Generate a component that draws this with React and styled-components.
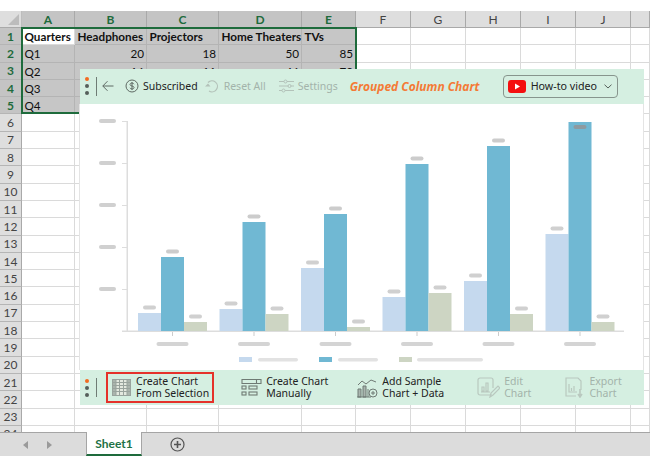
import React from 'react';
import styled, { createGlobalStyle } from 'styled-components';

const GlobalStyle = createGlobalStyle`
	html, body {
		margin: 0;
		background: #ffffff;
	}
	#root {
		width: 650px;
		height: 467px;
		overflow: hidden;
	}
`;

const colWidths = [22, 53, 72, 72, 83, 54, 55, 55, 55, 55, 55, 19];
const colNames = ['A', 'B', 'C', 'D', 'E', 'F', 'G', 'H', 'I', 'J', ''];
const rowCount = 24;
const headerBold = ['Quarters', 'Headphones', 'Projectors', 'Home Theaters', 'TVs'];
const cellData = [
	['Q1', 20, 18, 50, 85],
	['Q2', 16, 11, 46, 70],
	['Q3', '', '', '', ''],
	['Q4', '', '', '', ''],
];

const groups = [
	{ x: 138, light: 313, blue: 257, green: 322 },
	{ x: 219.5, light: 309, blue: 222, green: 314 },
	{ x: 301, light: 268, blue: 214, green: 327 },
	{ x: 382.5, light: 297, blue: 164, green: 293 },
	{ x: 464, light: 281, blue: 146, green: 314 },
	{ x: 545.5, light: 234, blue: 122, green: 322 },
];
const barW = 23;

const Page = styled.div`
	position: relative;
	width: 650px;
	height: 467px;
	padding-top: 11px;
	box-sizing: border-box;
	background: #ffffff;
	font-family: Lato, 'Liberation Sans', sans-serif;
`;

const Sheet = styled.div`
	position: relative;
	display: grid;
	grid-template-columns: ${colWidths.map((w) => `${w}px`).join(' ')};
	grid-template-rows: 17px repeat(${rowCount}, 17.3px);
	height: 421px;
	overflow: hidden;
`;

const Corner = styled.div`
	background: #dedede;
	border-right: 1px solid #bdbdbd;
	border-bottom: 1px solid #a9a9a9;
	box-sizing: border-box;
	display: flex;
	justify-content: flex-end;
	align-items: flex-end;
	padding: 0 2px 2px 0;
	&::after {
		content: '';
		border-left: 11px solid transparent;
		border-bottom: 11px solid #bcbcbc;
	}
`;

const ColHead = styled.div`
	background: ${(p) => (p.$sel ? '#c4c4c4' : '#dedede')};
	color: ${(p) => (p.$sel ? '#1e6b3c' : '#444444')};
	font-size: 12px;
	font-weight: ${(p) => (p.$sel ? 700 : 400)};
	display: flex;
	align-items: center;
	justify-content: center;
	box-sizing: border-box;
	border-right: 1px solid #a9a9a9;
	border-bottom: 1px solid #a9a9a9;
`;

const RowHead = styled.div`
	background: ${(p) => (p.$sel ? '#c4c4c4' : '#dedede')};
	color: ${(p) => (p.$sel ? '#1e6b3c' : '#444444')};
	font-size: 12px;
	font-weight: ${(p) => (p.$sel ? 700 : 400)};
	display: flex;
	align-items: center;
	justify-content: center;
	box-sizing: border-box;
	border-bottom: 1px solid #b5b5b5;
	border-right: 1px solid #a9a9a9;
`;

const Cell = styled.div`
	background: ${(p) => (p.$sel ? '#c6c6c6' : '#ffffff')};
	color: #111111;
	font-size: 11.7px;
	font-weight: ${(p) => (p.$bold ? 700 : 400)};
	text-align: ${(p) => (p.$right ? 'right' : 'left')};
	line-height: 16px;
	padding: 0 2px 0 2.5px;
	white-space: nowrap;
	box-sizing: border-box;
	border-right: 1px solid ${(p) => (p.$sel ? '#b4b4b4' : '#dadada')};
	border-bottom: 1px solid ${(p) => (p.$sel ? '#b4b4b4' : '#dadada')};
`;

const Selection = styled.div`
	position: absolute;
	inset: -1px -1px 0 -1px;
	grid-column: 2 / 7;
	grid-row: 2 / 7;
	border: 2px solid #1e6b3c;
	pointer-events: none;
`;

const TabBar = styled.div`
	height: 24px;
	box-sizing: border-box;
	background: #dcdcdc;
	border-top: 1px solid #a5a5a5;
	display: flex;
	align-items: stretch;
`;

const NavArrows = styled.div`
	width: 86px;
	display: flex;
	align-items: center;
	gap: 19px;
	padding-left: 23px;
	box-sizing: border-box;
`;

const Arrow = styled.span`
	width: 0;
	height: 0;
	border-top: 4px solid transparent;
	border-bottom: 4px solid transparent;
	border-left: ${(p) => (p.$right ? '5px solid #9a9a9a' : 'none')};
	border-right: ${(p) => (p.$right ? 'none' : '5px solid #9a9a9a')};
`;

const SheetTab = styled.div`
	width: 56px;
	margin-top: -1px;
	background: #ffffff;
	border-left: 1px solid #a5a5a5;
	border-right: 1px solid #a5a5a5;
	border-bottom: 2px solid #1e6b3c;
	box-sizing: border-box;
	color: #1e7145;
	font-size: 12px;
	font-weight: 700;
	display: flex;
	align-items: center;
	justify-content: center;
`;

const AddSheet = styled.div`
	margin-left: 28px;
	display: flex;
	align-items: center;
`;

const Panel = styled.div`
	position: absolute;
	left: 80px;
	top: 69px;
	width: 564px;
	height: 336px;
	display: flex;
	flex-direction: column;
	background: #ffffff;
	font-family: 'Noto Sans', 'Open Sans', sans-serif;
`;

const HeaderBar = styled.div`
	height: 35px;
	box-sizing: border-box;
	padding: 0 0 1px 5px;
	background: #d5efe1;
	display: flex;
	align-items: center;
	flex: none;
`;

const BottomBar = styled.div`
	height: 35px;
	background: #d5efe1;
	display: flex;
	align-items: center;
	padding-left: 5px;
	flex: none;
`;

const Grip = styled.div`
	display: flex;
	flex-direction: column;
	gap: 3px;
	width: 5px;
`;

const Dot = styled.span`
	width: 4px;
	height: 4px;
	border-radius: 50%;
	background: ${(p) => (p.$orange ? '#f26b21' : '#555f5a')};
`;

const Divider = styled.div`
	width: 1px;
	height: 19px;
	margin-left: 6px;
	background: #6f7c75;
`;

const HeadItem = styled.div`
	display: flex;
	align-items: center;
	gap: 4px;
	margin-left: ${(p) => p.$ml}px;
	color: ${(p) => (p.$off ? '#a3b3aa' : '#222222')};
	font-size: 10.5px;
	white-space: nowrap;
`;

const Title = styled.div`
	margin-left: 12px;
	width: 153px;
	color: #f47a35;
	font-family: 'Open Sans', sans-serif;
	font-size: 12px;
	font-style: italic;
	font-weight: 700;
	white-space: nowrap;
`;

const VideoButton = styled.div`
	width: 115px;
	height: 23px;
	box-sizing: border-box;
	border: 1px solid #87958d;
	border-radius: 4px;
	display: flex;
	align-items: center;
	padding: 0 5px 0 4px;
	gap: 5px;
	color: #222222;
	font-size: 10.7px;
	white-space: nowrap;
`;

const VideoLabel = styled.span`
	flex: 1;
`;

const ChartArea = styled.div`
	flex: 1;
	min-height: 0;
	border-left: 1px solid #e4e4e4;
	border-right: 1px solid #e4e4e4;
	margin-left: -1px;
	svg {
		display: block;
	}
`;

const ToolButton = styled.div`
	display: flex;
	align-items: center;
	gap: 4px;
	height: 31px;
	box-sizing: border-box;
	margin-left: ${(p) => p.$ml}px;
	padding: 0 3px 0 3px;
	border: ${(p) => (p.$active ? '2px solid #e5312a' : '2px solid transparent')};
	color: ${(p) => (p.$off ? '#a3b3aa' : '#222222')};
	font-size: 10.5px;
	line-height: 11.5px;
	white-space: nowrap;
`;

const ToolLabel = styled.div`
	display: flex;
	flex-direction: column;
`;

const Dots = () => (
	<Grip>
		<Dot $orange />
		<Dot />
		<Dot />
	</Grip>
);

const ChartSvg = () => (
	<svg width="564" height="266" viewBox="0 0 564 266">
		<g transform="translate(-80,-104)">
			<rect x="126.5" y="121" width="1.5" height="210" fill="#dddddd" />
			<rect x="122" y="330.5" width="502" height="1.5" fill="#dddddd" />
			{[121, 163, 205, 247, 289, 331].map((y, i) => (
				<g key={y}>
					<rect x="122" y={y} width="5" height="1" fill="#dddddd" />
					{i < 5 && <rect x="99" y={y - 2} width="17" height="4" rx="2" fill="#d0d0d0" />}
				</g>
			))}
			{groups.map((g) => (
				<g key={g.x}>
					<rect x={g.x} y={g.light} width={barW} height={331 - g.light} fill="#c5d9ee" />
					<rect x={g.x + barW} y={g.blue} width={barW} height={331 - g.blue} fill="#70b8d3" />
					<rect x={g.x + barW * 2} y={g.green} width={barW} height={331 - g.green} fill="#cdd5c3" />
					<rect x={g.x + 5} y={g.light - 7.5} width="13" height="4" rx="2" fill="#d0d0d0" />
					{g.blue > 130 && (
						<rect x={g.x + barW + 5} y={g.blue - 7.5} width="13" height="4" rx="2" fill="#cccccc" />
					)}
					{g.blue <= 130 && (
						<rect x={g.x + barW + 5} y={g.blue + 3} width="13" height="4" rx="2" fill="#8e9aa0" />
					)}
					<rect x={g.x + barW * 2 + 5} y={g.green - 7.5} width="13" height="4" rx="2" fill="#d0d0d0" />
					<rect x={g.x + barW * 1.5 - 0.5} y="332" width="1" height="4" fill="#cccccc" />
					<rect x={g.x + barW * 1.5 - 16} y="342" width="32" height="4" rx="2" fill="#d4d4d4" />
				</g>
			))}
			<rect x="239" y="357" width="13" height="5" fill="#c5d9ee" />
			<rect x="258" y="358" width="40" height="3.5" rx="1.7" fill="#e2e2e2" />
			<rect x="319" y="357" width="13" height="5" fill="#70b8d3" />
			<rect x="338" y="358" width="40" height="3.5" rx="1.7" fill="#e2e2e2" />
			<rect x="399" y="357" width="13" height="5" fill="#cdd5c3" />
			<rect x="417" y="358" width="66" height="3.5" rx="1.7" fill="#e2e2e2" />
		</g>
	</svg>
);

const BackIcon = () => (
	<svg width="12" height="12" viewBox="0 0 12 12" fill="none" stroke="#5f6a64" strokeWidth="1">
		<path d="M11.500 6H.8M5.500 1.200.8 6l4.700 4.800" />
	</svg>
);

const DollarIcon = () => (
	<svg width="14" height="14" viewBox="0 0 14 14" fill="none" stroke="#5f6a64" strokeWidth="1">
		<circle cx="7" cy="7" r="6" />
		<path d="M9 5.200C8.600 4.400 7.800 4 7 4c-1.200 0-2 .6-2 1.500C5 7.600 9 6.400 9 8.500 9 9.400 8.200 10 7 10c-.9 0-1.700-.4-2-1.200M7 3v8" />
	</svg>
);

const ResetIcon = () => (
	<svg width="16" height="14" viewBox="0 0 16 14" fill="none" stroke="#b3c2b9" strokeWidth="1.200">
		<path d="M4 3.500A5.500 5.500 0 1 1 5 12" />
		<path d="M1 7.500 4 4.500l2.500 3" fill="#b3c2b9" stroke="none" />
	</svg>
);

const SettingsIcon = () => (
	<svg width="15" height="14" viewBox="0 0 15 14" fill="none" stroke="#b3c2b9" strokeWidth="1">
		<path d="M0 2.500h5M8 2.500h7M0 7h9M12 7h3M0 11.500h3M6 11.500h9" />
		<circle cx="6.500" cy="2.500" r="1.500" />
		<circle cx="10.500" cy="7" r="1.500" />
		<circle cx="4.500" cy="11.500" r="1.500" />
	</svg>
);

const YoutubeIcon = () => (
	<svg width="18" height="13" viewBox="0 0 18 13">
		<rect width="18" height="13" rx="3" fill="#f40f0f" />
		<path d="M7 3.500v6l5-3z" fill="#ffffff" />
	</svg>
);

const ChevronIcon = () => (
	<svg width="8" height="5" viewBox="0 0 8 5" fill="none" stroke="#55605a" strokeWidth="1">
		<path d="M.5.700 4 4 7.500.700" />
	</svg>
);

const TableIcon = () => (
	<svg width="21" height="21" viewBox="0 0 21 21" fill="none" stroke="#99a39d" strokeWidth="1">
		<rect x="1.500" y="2.500" width="18" height="16" fill="#e3e8df" />
		<rect x="1.500" y="2.500" width="3.500" height="16" fill="#aab4ad" />
		<rect x="16" y="2.500" width="3.500" height="16" fill="#aab4ad" />
		<path d="M1.500 5.500h18M1.500 8.500h18M1.500 11.500h18M1.500 14.500h18M8.500 2.500v16M12.500 2.500v16" />
	</svg>
);

const ManualIcon = () => (
	<svg width="21" height="20" viewBox="0 0 21 20" fill="none" stroke="#6f7a74" strokeWidth="1.100">
		<path d="M1 1.500h19v4h-19zM15.500 1.500v4" />
		<rect x="1" y="8" width="4" height="3" />
		<rect x="8" y="8" width="8" height="3" />
		<rect x="1" y="14" width="4" height="3" />
		<rect x="8" y="14" width="8" height="3" />
	</svg>
);

const SampleIcon = () => (
	<svg width="21" height="20" viewBox="0 0 21 20" fill="none" stroke="#6f7a74" strokeWidth="1">
		<path d="M1 7l4-4 4 3 5-4 5 2" />
		<path d="M1 19v-8h3v8zM6 19V8h3v11zM11 19v-8" fill="#a9b5ae" />
		<path d="M0 19h14" />
		<circle cx="16" cy="15" r="4" fill="#d5efe1" />
		<path d="M14 15h4M16 13v4" />
	</svg>
);

const EditIcon = () => (
	<svg width="23" height="21" viewBox="0 0 23 21" fill="none" stroke="#b9c8bf" strokeWidth="1.200">
		<path d="M15 18H3a2 2 0 0 1-2-2V3a2 2 0 0 1 2-2h11a2 2 0 0 1 2 2v8" />
		<path d="M5 14V10h2v4zM9 14V6h2v8zM4 15h9" />
		<path d="M13 20l1-4 7-7 2 2-7 7z" />
	</svg>
);

const ExportIcon = () => (
	<svg width="20" height="21" viewBox="0 0 20 21" fill="none" stroke="#b9c8bf" strokeWidth="1.200">
		<path d="M11 19H1V1h12l3 3v9" />
		<path d="M4 7v8h8M6.500 14v-3M9 14V9" />
		<path d="M15 12v7M13 17l2 3 2-3" strokeWidth="1.600" />
	</svg>
);

const PlusIcon = () => (
	<svg width="15" height="15" viewBox="0 0 15 15" fill="none" stroke="#555555" strokeWidth="1.200">
		<circle cx="7.500" cy="7.500" r="6.500" />
		<path d="M7.500 4v7M4 7.500h7" strokeWidth="1.600" />
	</svg>
);

const App = () => (
	<Page>
		<GlobalStyle />
		<Sheet>
			<Corner />
			{colNames.map((c, i) => (
				<ColHead key={i} $sel={i < 5}>
					{c}
				</ColHead>
			))}
			{Array.from({ length: rowCount }, (_, r) => (
				<React.Fragment key={r}>
					<RowHead $sel={r < 5}>{r + 1}</RowHead>
					{colNames.map((_, c) => {
						if (r === 0 && c < 5) {
							return (
								<Cell key={c} $sel={c > 0} $bold>
									{headerBold[c]}
								</Cell>
							);
						}
						if (r < 5 && c < 5) {
							return (
								<Cell key={c} $sel $right={c > 0}>
									{cellData[r - 1][c]}
								</Cell>
							);
						}
						return <Cell key={c} />;
					})}
				</React.Fragment>
			))}
			<Selection />
		</Sheet>
		<TabBar>
			<NavArrows>
				<Arrow />
				<Arrow $right />
			</NavArrows>
			<SheetTab>Sheet1</SheetTab>
			<AddSheet>
				<PlusIcon />
			</AddSheet>
		</TabBar>

		<Panel>
			<HeaderBar>
				<Dots />
				<Divider />
				<HeadItem $ml={5}>
					<BackIcon />
				</HeadItem>
				<HeadItem $ml={11}>
					<DollarIcon />
					Subscribed
				</HeadItem>
				<HeadItem $ml={6} $off>
					<ResetIcon />
					Reset All
				</HeadItem>
				<HeadItem $ml={13} $off>
					<SettingsIcon />
					Settings
				</HeadItem>
				<Title>Grouped Column Chart</Title>
				<VideoButton>
					<YoutubeIcon />
					<VideoLabel>How-to video</VideoLabel>
					<ChevronIcon />
				</VideoButton>
			</HeaderBar>
			<ChartArea>
				<ChartSvg />
			</ChartArea>
			<BottomBar>
				<Dots />
				<Divider />
				<ToolButton $ml={9} $active>
					<TableIcon />
					<ToolLabel>
						<span>Create Chart</span>
						<span>From Selection</span>
					</ToolLabel>
				</ToolButton>
				<ToolButton $ml={22}>
					<ManualIcon />
					<ToolLabel>
						<span>Create Chart</span>
						<span>Manually</span>
					</ToolLabel>
				</ToolButton>
				<ToolButton $ml={19}>
					<SampleIcon />
					<ToolLabel>
						<span>Add Sample</span>
						<span>Chart + Data</span>
					</ToolLabel>
				</ToolButton>
				<ToolButton $ml={23} $off>
					<EditIcon />
					<ToolLabel>
						<span>Edit</span>
						<span>Chart</span>
					</ToolLabel>
				</ToolButton>
				<ToolButton $ml={24} $off>
					<ExportIcon />
					<ToolLabel>
						<span>Export</span>
						<span>Chart</span>
					</ToolLabel>
				</ToolButton>
			</BottomBar>
		</Panel>
	</Page>
);

export default App;
